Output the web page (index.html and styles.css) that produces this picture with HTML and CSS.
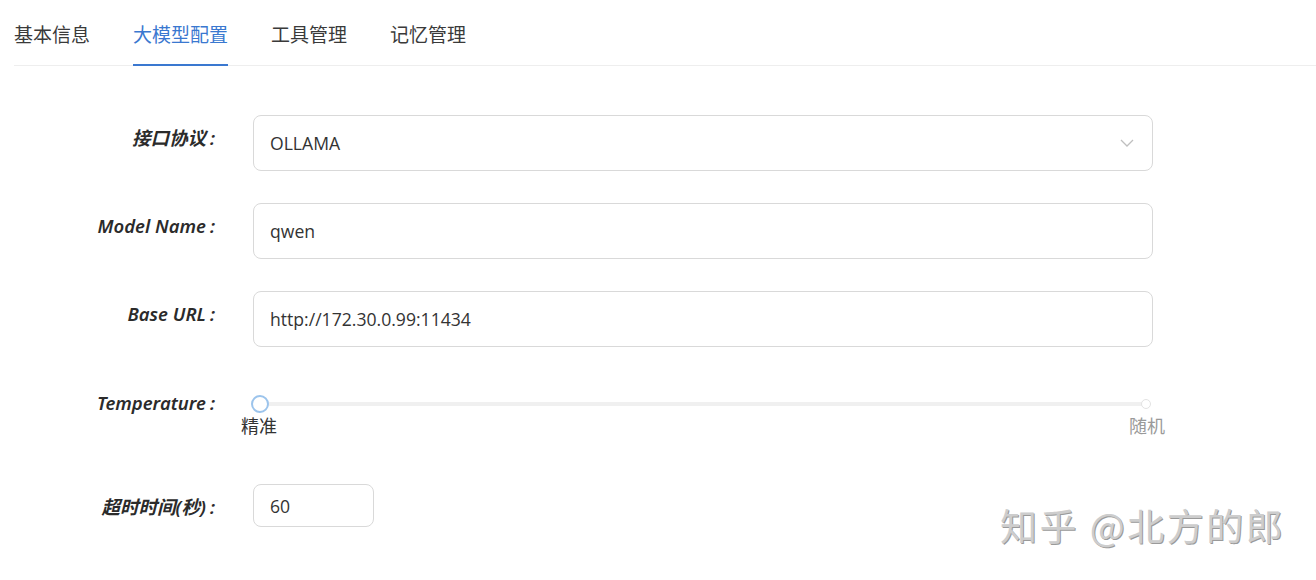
FILE: index.html
```html
<!DOCTYPE html>
<html lang="zh-CN">
<head>
    <meta charset="UTF-8">
    <title>大模型配置</title>
    <link rel="stylesheet" href="styles.css">
</head>
<body>
    <!-- Tabs -->
    <div class="tabs">
        <div class="tab">基本信息</div>
        <div class="tab active">大模型配置</div>
        <div class="tab">工具管理</div>
        <div class="tab">记忆管理</div>
    </div>

    <!-- Form -->
    <form class="form">
        <div class="row">
            <label class="label">接口协议<span class="colon">:</span></label>
            <div class="field select">
                <span>OLLAMA</span>
                <svg class="chevron" width="14" height="8" viewBox="0 0 14 8"><path d="M1 1l6 6 6-6" fill="none" stroke="#bfbfbf" stroke-width="1.3"/></svg>
            </div>
        </div>

        <div class="row">
            <label class="label">Model Name<span class="colon">:</span></label>
            <div class="field">qwen</div>
        </div>

        <div class="row">
            <label class="label">Base URL<span class="colon">:</span></label>
            <div class="field">http://172.30.0.99:11434</div>
        </div>

        <div class="row slider-row">
            <label class="label">Temperature<span class="colon">:</span></label>
            <div class="slider">
                <div class="track">
                    <span class="thumb"></span>
                    <span class="end-dot"></span>
                </div>
                <div class="marks">
                    <span class="mark">精准</span>
                    <span class="mark muted">随机</span>
                </div>
            </div>
        </div>

        <div class="row">
            <label class="label">超时时间(秒)<span class="colon">:</span></label>
            <div class="field small">60</div>
        </div>
    </form>

    <div class="watermark">知乎 @北方的郎</div>
</body>
</html>
```

FILE: styles.css
```css
/* Theme Colors */
:root {
    --blue: #3a78d0;
    --text: #333;
    --border: #d9d9d9;
    --muted: #9a9a9a;
}

body {
    margin: 0;
    font-family: "Open Sans", "Noto Sans CJK SC", sans-serif;
    color: var(--text);
    background: #fff;
    position: relative;
    height: 580px;
    overflow: hidden;
}

/* Tabs */
.tabs {
    display: flex;
    gap: 43px;
    margin-left: 14px;
    border-bottom: 1px solid #eeeeee;
}

.tab {
    font-size: 19px;
    line-height: 26px;
    padding: 22px 0 16px;
    border-bottom: 2px solid transparent;
    margin-bottom: -1px;
    color: #3a3a3a;
}

.tab.active {
    color: var(--blue);
    border-bottom-color: var(--blue);
}

/* Form */
.form {
    display: flex;
    flex-direction: column;
    gap: 32px;
    padding-top: 49px;
}

.row {
    display: grid;
    grid-template-columns: 215px 900px;
    column-gap: 38px;
    align-items: start;
}

.label {
    text-align: right;
    font-family: "Noto Sans", "Noto Sans CJK SC", sans-serif;
    font-style: italic;
    font-weight: 600;
    font-size: 18.5px;
    line-height: 24px;
    padding-top: 11px;
    color: #2b2b2b;
}

.colon {
    margin-left: 4px;
}

.field {
    box-sizing: border-box;
    height: 56px;
    border: 1px solid var(--border);
    border-radius: 8px;
    padding: 0 16px;
    display: flex;
    align-items: center;
    font-size: 17.6px;
}

.field.small {
    width: 121px;
    height: 43px;
}

.select {
    justify-content: space-between;
}

.chevron {
    margin-right: 2px;
}

/* Slider */
.slider-row {
    height: 72px;
    margin-top: 1px;
}

.slider {
    padding: 22px 7px 0;
}

.track {
    position: relative;
    height: 4px;
    background: #f0f0f0;
    border-radius: 2px;
}

.thumb {
    position: absolute;
    left: -9px;
    top: -7px;
    width: 14px;
    height: 14px;
    border: 2px solid #9cc4ec;
    border-radius: 50%;
    background: #fff;
}

.end-dot {
    position: absolute;
    right: -5px;
    top: -3px;
    width: 8px;
    height: 8px;
    border: 1px solid #e3e3e3;
    border-radius: 50%;
    background: #fff;
}

.marks {
    display: flex;
    justify-content: space-between;
    margin: 6px -19px 0 -19px;
    font-family: "Noto Sans CJK SC", sans-serif;
    font-size: 18px;
    line-height: 26px;
}

.mark.muted {
    color: var(--muted);
}

/* Watermark */
.watermark {
    position: absolute;
    left: 1000px;
    top: 498px;
    font-family: "Noto Sans CJK SC", sans-serif;
    font-size: 37px;
    color: #cdcdcd;
    text-shadow: 1px 1px 0 #9a9a9a;
    letter-spacing: 2.5px;
}
```
